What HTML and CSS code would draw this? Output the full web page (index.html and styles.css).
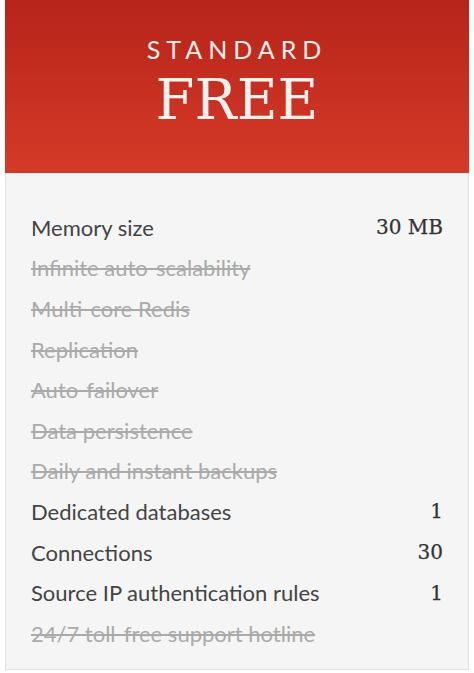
FILE: index.html
```html
<!DOCTYPE html>
<html lang="en">
<head>
  <meta charset="UTF-8">
  <title>Standard Free</title>
  <meta name="viewport" content="width=device-width, initial-scale=1.0">
  <link rel="stylesheet" href="styles.css">
</head>
<body>
  <div class="plan">
    <div class="plan-head">
      <div class="plan-name">Standard</div>
      <div class="plan-price">FREE</div>
    </div>

    <ul class="features">
      <li><span>Memory size</span><b>30 MB</b></li>
      <li class="off"><span>Infinite auto-scalability</span></li>
      <li class="off"><span>Multi-core Redis</span></li>
      <li class="off"><span>Replication</span></li>
      <li class="off"><span>Auto-failover</span></li>
      <li class="off"><span>Data persistence</span></li>
      <li class="off"><span>Daily and instant backups</span></li>
      <li><span>Dedicated databases</span><b>1</b></li>
      <li><span>Connections</span><b>30</b></li>
      <li><span>Source IP authentication rules</span><b>1</b></li>
      <li class="off"><span>24/7 toll-free support hotline</span></li>
    </ul>
  </div>
</body>
</html>
```

FILE: styles.css
```css
body {
  margin: 0;
  background: #fff;
  font-family: Lato, "Open Sans", sans-serif;
}

.plan {
  margin: 0 5px;
  background: #f5f5f5;
  border: 1px solid #e2e2e2;
  border-top: none;
  height: 670px;
  box-sizing: border-box;
}

.plan-head {
  height: 173px;
  background: linear-gradient(#b7241a, #d53a27);
  color: #f7f1ee;
  text-align: center;
  padding-top: 33px;
  box-sizing: border-box;
  margin: 0 -1px;
}

.plan-name {
  font-size: 25px;
  letter-spacing: 6px;
  text-transform: uppercase;
  line-height: 32px;
}

.plan-price {
  font-family: "DejaVu Serif", serif;
  font-size: 56px;
  line-height: 64px;
  margin-top: 3px;
}

.features {
  list-style: none;
  margin: 0;
  padding: 34px 25px 0 25px;
}

.features li {
  display: flex;
  justify-content: space-between;
  align-items: center;
  height: 40.6px;
  font-size: 22px;
  color: #444;
}

.features b {
  font-family: "DejaVu Serif", serif;
  font-weight: normal;
  font-size: 20px;
  color: #333;
  -webkit-text-stroke: 0.25px #333;
}

.features li.off span {
  color: #aaa;
  text-decoration: line-through;
}
```
